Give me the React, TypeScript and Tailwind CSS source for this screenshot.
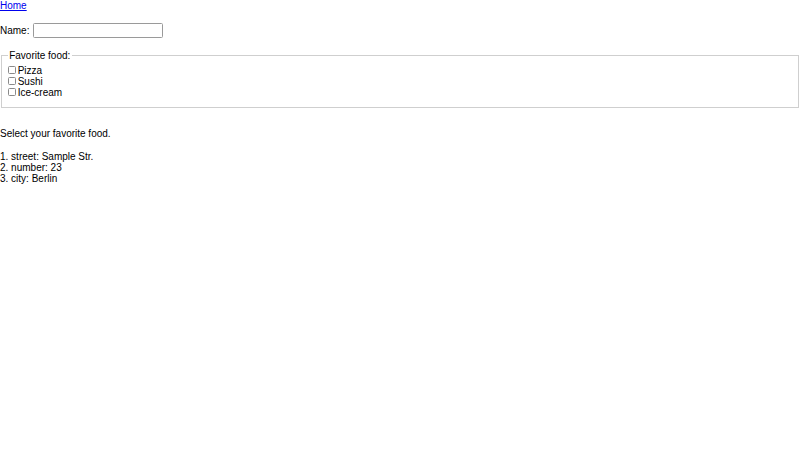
import React from "react";

export default function App() {
  const foods = ["Pizza", "Sushi", "Ice-cream"];
  return (
    <div className="min-h-[450px] w-[800px] bg-white font-['Liberation_Sans',Arial,sans-serif] text-[10px] leading-[11px] text-black">
      <div className="h-[11px]">
        <a href="#" className="text-[#0000EE] underline">
          Home
        </a>
      </div>
      <form>
        <div className="mt-[12px] flex h-[15px] items-center">
          <label htmlFor="name">Name:</label>
          <input
            id="name"
            type="text"
            className="ml-[4px] h-[15px] w-[130px] rounded-[1.5px] border border-[#9a9a9a] bg-white px-[1px] text-[8px] outline-none"
          />
        </div>
        <fieldset className="mx-[1.2px] mt-[11.5px] border border-[#cfcfcf] pb-[9px] pl-[5.5px] pr-[6px] pt-[4px]">
          <legend className="px-[1.5px] leading-[11px]">Favorite food:</legend>
          {foods.map((f) => (
            <label key={f} className="flex h-[11px] items-center">
              <input
                type="checkbox"
                className="m-0 h-[8px] w-[8px] appearance-none rounded-[1.5px] border border-[#8a8a8a] bg-white"
              />
              <span className="ml-[2px]">{f}</span>
            </label>
          ))}
        </fieldset>
      </form>
      <p className="mt-[20px]">Select your favorite food.</p>
      <div className="mt-[12px]">
        <div>1. street: Sample Str.</div>
        <div>2. number: 23</div>
        <div>3. city: Berlin</div>
      </div>
    </div>
  );
}
